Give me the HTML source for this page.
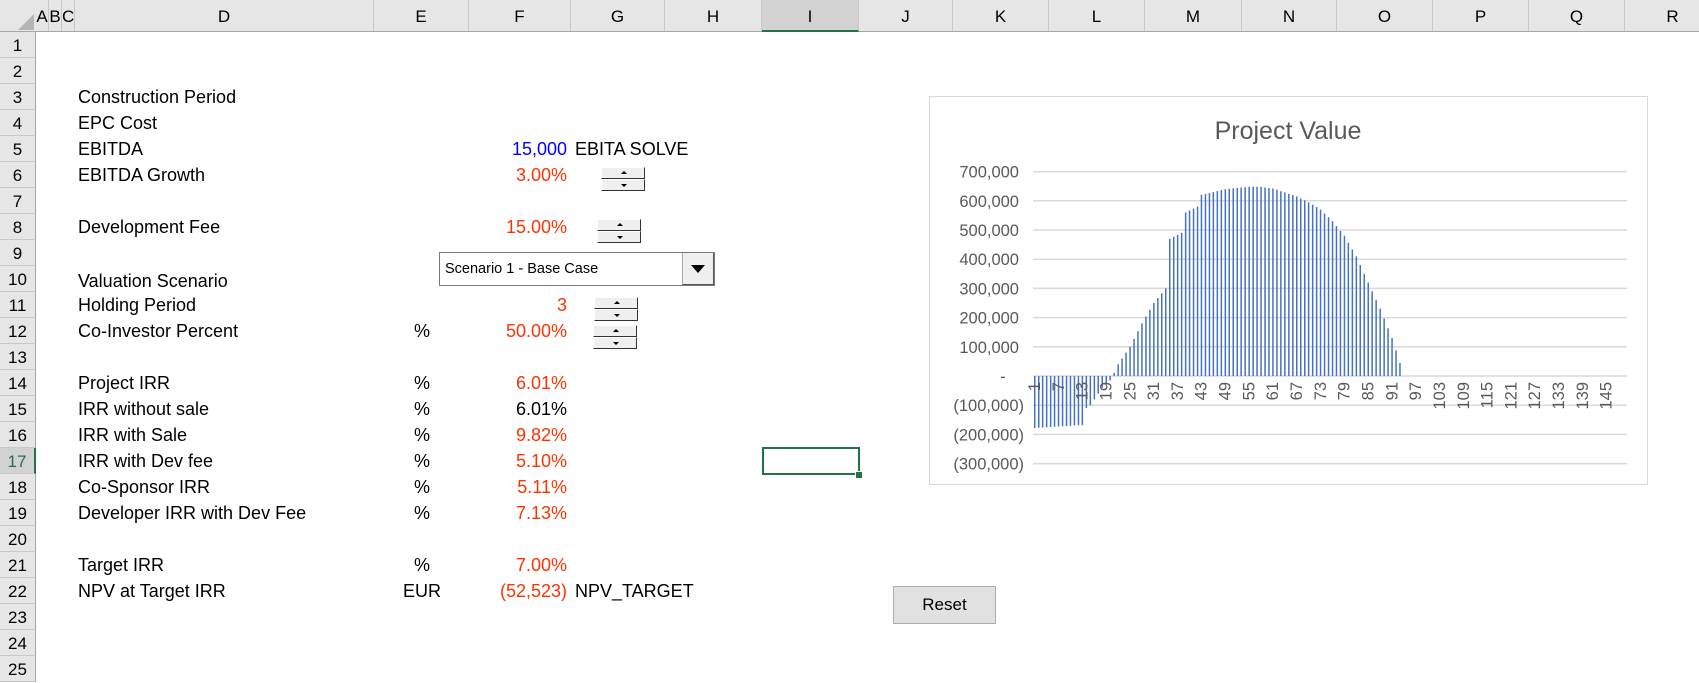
<!DOCTYPE html>
<html><head><meta charset="utf-8">
<style>
body{margin:0;width:1699px;height:674px;overflow:hidden;background:#fff;position:relative;font-family:"Liberation Sans",Arial,sans-serif}
.hdr{position:absolute;top:0;left:0;width:1699px;height:32px;background:#e6e6e6;border-bottom:1px solid #a6a6a6;box-sizing:border-box}
.ch{position:absolute;top:0;height:31px;line-height:34px;text-align:center;font-size:17px;color:#000;border-right:1px solid #c8c8c8;box-sizing:border-box}
.rh{position:absolute;left:0;width:36px;height:26px;background:#e6e6e6;border-bottom:1px solid #c8c8c8;border-right:1px solid #a6a6a6;box-sizing:border-box;text-align:center;font-size:17px;line-height:27px}
.t{position:absolute;font-size:18px;line-height:26px;white-space:nowrap;color:#000}
.r{color:#ff3300;text-align:right;width:120px}
.b{color:#0000ff;text-align:right;width:120px}
.pc{width:40px;text-align:center}
.sp{position:absolute;width:44px;height:22px}
.sp div{height:10px;background:#efefef;border:1px solid #fff;border-right:1px solid #333;border-bottom:1px solid #333;box-sizing:content-box;position:relative;width:42px}
.sp div:after{content:"";position:absolute;left:19px;border-left:3px solid transparent;border-right:3px solid transparent}
.sp .u:after{top:3px;border-bottom:3px solid #000}
.sp .d:after{top:4px;border-top:3px solid #000}
</style></head><body>
<div class="hdr"></div>
<div style="position:absolute;left:18px;top:14px;width:0;height:0;border-left:16px solid transparent;border-bottom:16px solid #b5b5b5"></div>
<div class="ch" style="left:36px;width:13px">A</div>
<div class="ch" style="left:49px;width:13px">B</div>
<div class="ch" style="left:62px;width:13px">C</div>
<div class="ch" style="left:75px;width:299px">D</div>
<div class="ch" style="left:374px;width:95px">E</div>
<div class="ch" style="left:469px;width:102px">F</div>
<div class="ch" style="left:571px;width:94px">G</div>
<div class="ch" style="left:665px;width:97px">H</div>
<div class="ch" style="left:762px;width:97px;background:#d2d2d2;border-bottom:2px solid #217346;height:32px">I</div>
<div class="ch" style="left:859px;width:94px">J</div>
<div class="ch" style="left:953px;width:96px">K</div>
<div class="ch" style="left:1049px;width:96px">L</div>
<div class="ch" style="left:1145px;width:97px">M</div>
<div class="ch" style="left:1242px;width:95px">N</div>
<div class="ch" style="left:1337px;width:96px">O</div>
<div class="ch" style="left:1433px;width:96px">P</div>
<div class="ch" style="left:1529px;width:96px">Q</div>
<div class="ch" style="left:1625px;width:96px">R</div>
<div id="rows"></div>

<div class="t" style="left:78px;top:84px">Construction Period</div>
<div class="t" style="left:78px;top:110px">EPC Cost</div>
<div class="t" style="left:78px;top:136px">EBITDA</div>
<div class="t b" style="left:447px;top:136px">15,000</div>
<div class="t" style="left:575px;top:136px">EBITA SOLVE</div>
<div class="t" style="left:78px;top:162px">EBITDA Growth</div>
<div class="t r" style="left:447px;top:162px">3.00%</div>
<div class="t" style="left:78px;top:214px">Development Fee</div>
<div class="t r" style="left:447px;top:214px">15.00%</div>
<div class="t" style="left:78px;top:268px">Valuation Scenario</div>
<div class="t" style="left:78px;top:292px">Holding Period</div>
<div class="t r" style="left:447px;top:292px">3</div>
<div class="t" style="left:78px;top:318px">Co-Investor Percent</div>
<div class="t pc" style="left:402px;top:318px">%</div>
<div class="t r" style="left:447px;top:318px">50.00%</div>
<div class="t" style="left:78px;top:370px">Project IRR</div>
<div class="t pc" style="left:402px;top:370px">%</div>
<div class="t r" style="left:447px;top:370px">6.01%</div>
<div class="t" style="left:78px;top:396px">IRR without sale</div>
<div class="t pc" style="left:402px;top:396px">%</div>
<div class="t r" style="left:447px;top:396px;color:#000">6.01%</div>
<div class="t" style="left:78px;top:422px">IRR with Sale</div>
<div class="t pc" style="left:402px;top:422px">%</div>
<div class="t r" style="left:447px;top:422px">9.82%</div>
<div class="t" style="left:78px;top:448px">IRR with Dev fee</div>
<div class="t pc" style="left:402px;top:448px">%</div>
<div class="t r" style="left:447px;top:448px">5.10%</div>
<div class="t" style="left:78px;top:474px">Co-Sponsor IRR</div>
<div class="t pc" style="left:402px;top:474px">%</div>
<div class="t r" style="left:447px;top:474px">5.11%</div>
<div class="t" style="left:78px;top:500px">Developer IRR with Dev Fee</div>
<div class="t pc" style="left:402px;top:500px">%</div>
<div class="t r" style="left:447px;top:500px">7.13%</div>
<div class="t" style="left:78px;top:552px">Target IRR</div>
<div class="t pc" style="left:402px;top:552px">%</div>
<div class="t r" style="left:447px;top:552px">7.00%</div>
<div class="t" style="left:78px;top:578px">NPV at Target IRR</div>
<div class="t pc" style="left:402px;top:578px">EUR</div>
<div class="t r" style="left:447px;top:578px">(52,523)</div>
<div class="t" style="left:575px;top:578px">NPV_TARGET</div>

<div class="sp" style="left:601px;top:167px"><div class="u"></div><div class="d"></div></div>
<div class="sp" style="left:597px;top:219px"><div class="u"></div><div class="d"></div></div>
<div class="sp" style="left:594px;top:297px"><div class="u"></div><div class="d"></div></div>
<div class="sp" style="left:593px;top:325px"><div class="u"></div><div class="d"></div></div>

<div style="position:absolute;left:439px;top:252px;width:276px;height:34px;border:1px solid #7a7a7a;box-sizing:border-box;background:#fff">
<div style="position:absolute;left:5px;top:0;line-height:32px;font-size:14.5px">Scenario 1 - Base Case</div>
<div style="position:absolute;right:0;top:0;width:32px;height:32px;background:#efefef;border-left:1px solid #aaa;border-right:1px solid #555;border-bottom:1px solid #555;box-sizing:border-box"><div style="position:absolute;left:8px;top:12px;border-left:7px solid transparent;border-right:7px solid transparent;border-top:8px solid #000"></div></div>
</div>

<div style="position:absolute;left:762px;top:447px;width:98px;height:28px;border:2px solid #217346;box-sizing:border-box"></div>
<div style="position:absolute;left:855px;top:471px;width:6px;height:6px;background:#217346;border:1px solid #fff"></div>

<div style="position:absolute;left:893px;top:586px;width:103px;height:38px;background:#e1e1e1;border:1px solid #adadad;box-sizing:border-box;text-align:center;line-height:36px;font-size:17px">Reset</div>

<svg id="ch" style="position:absolute;left:929px;top:96px" width="720" height="390" xmlns="http://www.w3.org/2000/svg"></svg>

<script>
var rowsEl=document.getElementById('rows'),h='';
for(var n=1;n<=25;n++){var tp=32+(n-1)*26;var st=n==17?'background:#d2d2d2;color:#217346;border-right:2px solid #217346;':'';h+='<div class="rh" style="top:'+tp+'px;'+st+'">'+n+'</div>';}
rowsEl.innerHTML=h;
var s='<rect x="0.5" y="0.5" width="718" height="388" fill="#fff" stroke="#d9d9d9"/>';
s+='<text x="359" y="43" font-size="25" fill="#595959" text-anchor="middle" font-family="Liberation Sans, sans-serif">Project Value</text>';
var ox=104,z=280,k=29.2/100000;
var labs=['700,000','600,000','500,000','400,000','300,000','200,000','100,000','-','(100,000)','(200,000)','(300,000)'];
for(var i=0;i<11;i++){var y=z-(7-i)*29.2;s+='<line x1="'+ox+'" x2="698" y1="'+y+'" y2="'+y+'" stroke="#d9d9d9" stroke-width="1.5"/>';
s+='<text x="'+(i<7?90:95)+'" y="'+(y+6)+'" font-size="16.5" fill="#595959" text-anchor="end" font-family="Liberation Sans, sans-serif">'+(i==7?'-&#160;&#160;&#160;&#160;':labs[i])+'</text>';}
var kn=[[1,-178e3],[13,-168e3],[14,-110e3],[15,-100e3],[18,-40e3],[20,-15e3],[21,1e4],[22,4e4],[25,1e5],[28,18e4],[31,25e4],[34,3e5],[35,47e4],[38,49e4],[39,56e4],[42,58e4],[43,62e4],[49,64e4],[55,648e3],[58,648e3],[61,642e3],[67,615e3],[70,595e3],[73,57e4],[76,53e4],[79,48e4],[82,41e4],[85,32e4],[88,23e4],[91,13e4],[93,45e3],[94,0]];
function v(x){for(var j=0;j<kn.length-1;j++){if(x>=kn[j][0]&&x<=kn[j+1][0]){var a=kn[j],b=kn[j+1];return a[1]+(b[1]-a[1])*(x-a[0])/(b[0]-a[0]);}}return 0;}
for(var x=1;x<=93;x++){var val=v(x),px=ox+1+(x-1)*3.97,hh=Math.abs(val)*k;s+='<rect x="'+px.toFixed(1)+'" y="'+(val>0?z-hh:z).toFixed(1)+'" width="1.5" height="'+hh.toFixed(1)+'" fill="#4472c4"/>';}
for(var x=1;x<=145;x+=6){var px=ox+1+(x-1)*3.97+6;s+='<text transform="translate('+px.toFixed(1)+','+(z+6)+') rotate(-90)" font-size="16.5" fill="#595959" text-anchor="end" font-family="Liberation Sans, sans-serif">'+x+'</text>';}
document.getElementById('ch').innerHTML=s;
</script>
</body></html>
